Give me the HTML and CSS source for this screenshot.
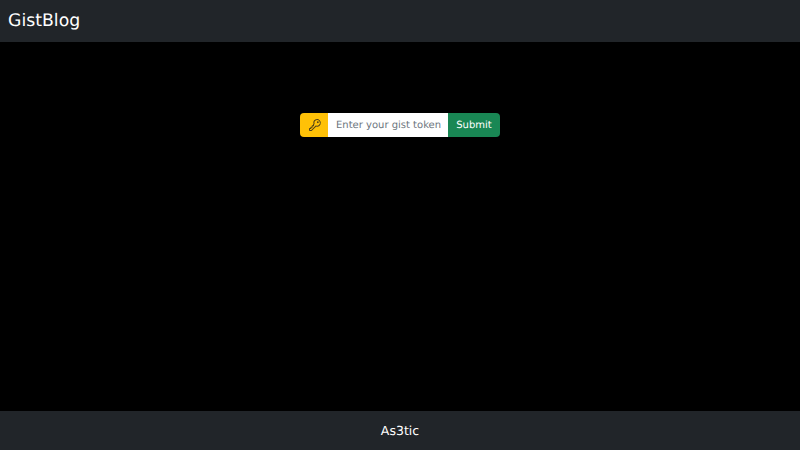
FILE: index.html
```html
<!DOCTYPE html>
<html lang="en">
<head>
  <meta charset="UTF-8" />
  <meta name="viewport" content="width=device-width, initial-scale=1.0" />
  <title>GistBlog</title>
  <link rel="stylesheet" href="styles.css">
</head>
<body>
  <header class="navbar">
    <a class="brand" href="#">GistBlog</a>
  </header>
  <main class="content">
    <form class="token-form">
      <span class="key-addon">
        <svg class="key-icon" viewBox="0 0 16 16" width="15" height="15" fill="currentColor">
          <path d="M0 8a4 4 0 0 1 7.465-2H14a.5.5 0 0 1 .354.146l1.5 1.5a.5.5 0 0 1 0 .708l-1.5 1.5a.5.5 0 0 1-.708 0L13 9.207l-.646.647a.5.5 0 0 1-.708 0L11 9.207l-.646.647a.5.5 0 0 1-.708 0L9 9.207l-.646.647A.5.5 0 0 1 8 10h-.535A4 4 0 0 1 0 8zm4-3a3 3 0 1 0 2.712 4.285A.5.5 0 0 1 7.163 9h.63l.853-.854a.5.5 0 0 1 .708 0l.646.647.646-.647a.5.5 0 0 1 .708 0l.646.647.646-.647a.5.5 0 0 1 .708 0l.646.647.793-.793-1-1h-6.63a.5.5 0 0 1-.451-.285A3 3 0 0 0 4 5z"/>
          <path d="M4 8a1 1 0 1 1-2 0 1 1 0 0 1 2 0z"/>
        </svg>
      </span>
      <input class="token-input" type="text" placeholder="Enter your gist token">
      <button class="submit-btn" type="button">Submit</button>
    </form>
  </main>
  <footer class="footer">As3tic</footer>
</body>
</html>
```

FILE: styles.css
```css
* {
  box-sizing: border-box;
}
body {
  margin: 0;
  height: 100vh;
  display: flex;
  flex-direction: column;
  overflow: hidden;
  background-color: #000;
  color: #fff;
  font-family: "DejaVu Sans", sans-serif;
  text-rendering: geometricPrecision;
}
.navbar {
  height: 42px;
  padding: 0 8px;
  display: flex;
  align-items: center;
  background-color: #212529;
}
.brand {
  font-size: 17.3px;
  color: #fff;
  text-decoration: none;
}
.content {
  flex: 1;
  display: flex;
  justify-content: center;
  align-items: flex-start;
  padding-top: 71px;
}
.token-form {
  display: flex;
  width: 200px;
  height: 24px;
  font-size: 10px;
}
.key-addon {
  width: 28px;
  display: flex;
  justify-content: center;
  align-items: center;
  background-color: #ffc107;
  color: #4a3d1a;
  border-radius: 4px 0 0 4px;
}
.key-icon {
  transform: rotate(135deg);
}
.token-input {
  flex: 1;
  min-width: 0;
  padding: 0 0 0 8px;
  border: 0;
  outline: 0;
  background-color: #fff;
  font: inherit;
  text-rendering: inherit;
}
.token-input::placeholder {
  color: #6c757d;
  opacity: 1;
}
.submit-btn {
  width: 52px;
  padding: 0;
  border: 0;
  background-color: #198754;
  color: #fff;
  font: inherit;
  text-rendering: inherit;
  border-radius: 0 4px 4px 0;
}
.footer {
  height: 39px;
  display: flex;
  justify-content: center;
  align-items: center;
  background-color: #212529;
  font-size: 12.5px;
}
```
